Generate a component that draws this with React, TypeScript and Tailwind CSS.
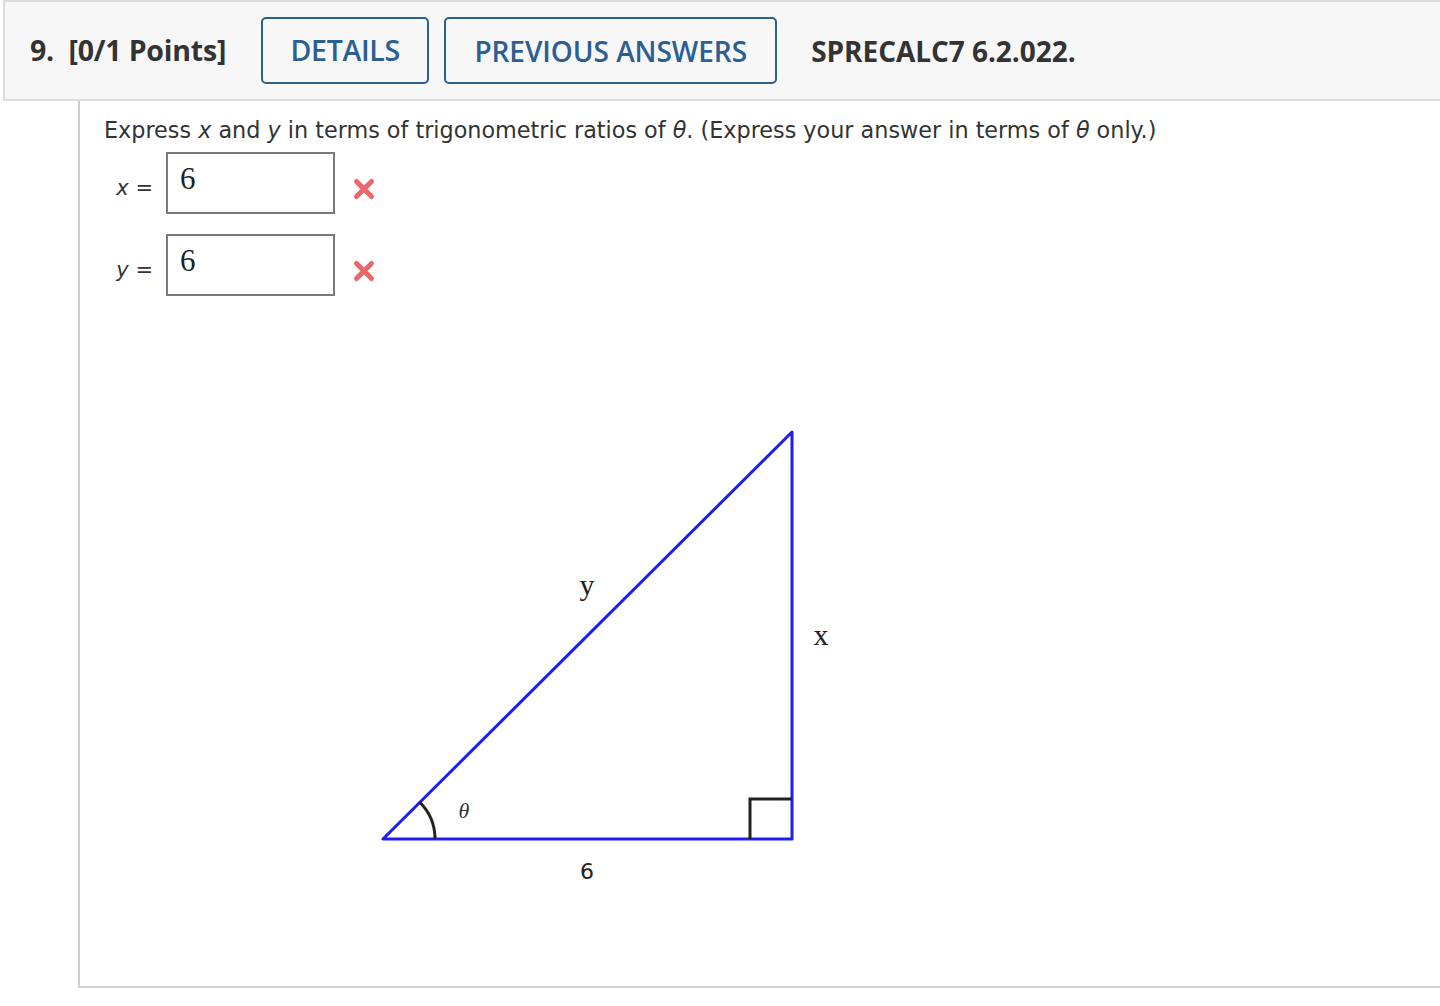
import React from "react";

function WrongMark() {
  return (
    <svg width="24" height="24" viewBox="0 0 24 24" className="shrink-0">
      <path d="M4.5 4.5 L19.5 19.5 M19.5 4.5 L4.5 19.5" stroke="#e8585c" strokeWidth="5" strokeLinecap="round" opacity="0.9" />
    </svg>
  );
}

function AnswerRow({ label, value }: { label: string; value: string }) {
  return (
    <div className="flex items-center">
      <div className="w-[86px] mt-[12px] text-right pr-[13px] text-[21px] text-[#333] font-['DejaVu_Sans',sans-serif] whitespace-pre">
        <span className="italic">{label}</span>{" ="}
      </div>
      <div className="w-[169px] h-[62px] border-2 border-[#7a7a7a] bg-white pl-[12px] pt-[6px] text-[31px] leading-[38px] text-[#222] font-['Liberation_Serif',serif]">
        {value}
      </div>
      <div className="ml-[17px] mt-[12px]">
        <WrongMark />
      </div>
    </div>
  );
}

function Triangle() {
  const blue = "#1d1df5";
  return (
    <svg width="540" height="500" viewBox="0 0 540 500" className="block">
      <path d="M43 439 L452 439 L452 32 Z" fill="none" stroke={blue} strokeWidth="3" strokeLinejoin="round" />
      <path d="M410 439 V399 H452" fill="none" stroke="#222" strokeWidth="3" />
      <path d="M95 439 A52 52 0 0 0 79.8 402.2" fill="none" stroke="#222" strokeWidth="3" />
      <text x="247" y="195" textAnchor="middle" fontFamily="Liberation Serif, serif" fontSize="30" fill="#222">y</text>
      <text x="481" y="245" textAnchor="middle" fontFamily="Liberation Serif, serif" fontSize="30" fill="#222">x</text>
      <text x="124" y="418" textAnchor="middle" fontFamily="Liberation Serif, serif" fontStyle="italic" fontSize="22" fill="#333">θ</text>
      <text x="247" y="479" textAnchor="middle" fontFamily="DejaVu Sans, sans-serif" fontSize="22" fill="#222">6</text>
    </svg>
  );
}

export default function App() {
  return (
    <div className="w-[1440px] h-[1006px] bg-white overflow-hidden font-['Open_Sans',sans-serif]">
      <div className="ml-[3px] h-[101px] border-2 border-r-0 border-[#dcdcdc] bg-[#f7f7f7] flex items-center pl-[25px]">
        <span className="text-[28.5px] font-bold text-[#333] tracking-[-0.2px]">9.&nbsp; [0/1 Points]</span>
        <button className="ml-[35px] h-[67px] w-[168px] border-2 border-[#2b5f92] rounded-[5px] text-[28.5px] font-semibold text-[#2b5f92] tracking-[-0.3px]">
          DETAILS
        </button>
        <button className="ml-[15px] h-[67px] w-[333px] border-2 border-[#2b5f92] rounded-[5px] text-[28px] font-semibold text-[#2b5f92] tracking-[-0.05px]">
          PREVIOUS ANSWERS
        </button>
        <span className="ml-[34px] text-[28px] font-bold text-[#333] tracking-[-0.05px]">SPRECALC7 6.2.022.</span>
      </div>
      <div className="ml-[78px] h-[887px] border-l-2 border-b-2 border-[#cfcfcf] pl-[24px] pt-[13px]">
        <p className="text-[22.3px] leading-[32px] text-[#333] font-['DejaVu_Sans',sans-serif]">
          Express <span className="italic">x</span> and <span className="italic">y</span> in terms of trigonometric ratios of{" "}
          <span className="italic">θ</span>. (Express your answer in terms of <span className="italic">θ</span> only.)
        </p>
        <div className="mt-[6px] -ml-[24px] flex flex-col gap-[20px]">
          <AnswerRow label="x" value="6" />
          <AnswerRow label="y" value="6" />
        </div>
        <div className="ml-[236px] mt-[104px]">
          <Triangle />
        </div>
      </div>
    </div>
  );
}
